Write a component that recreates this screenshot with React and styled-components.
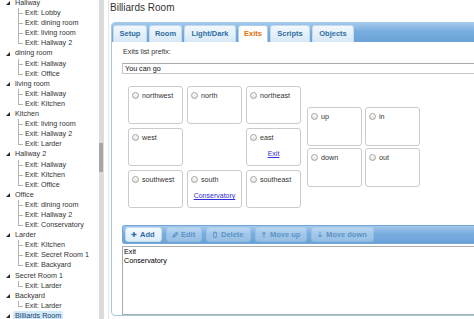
import React from 'react';
import styled, { createGlobalStyle } from 'styled-components';

const Global = createGlobalStyle`
  html, body { margin: 0; padding: 0; }
  body {
    width: 474px; height: 319px; overflow: hidden; background: #fff;
    font-family: "Liberation Sans", Arial, sans-serif; color: #333;
  }
`;

const Page = styled.div`
  display: flex;
  width: 474px;
  height: 319px;
  overflow: hidden;
`;

/* ---------- tree ---------- */
const TreePane = styled.div`
  flex: none;
  width: 99px;
  height: 100%;
  overflow: hidden;
  background: #fff;
`;

const TreeList = styled.div`
  margin-top: -2px;
  font-size: 7.2px;
  color: #333;
`;

const TopRow = styled.div`
  display: flex;
  align-items: center;
  height: 10.1px;
  line-height: 10.1px;
  padding-left: 6px;
  white-space: nowrap;
`;

const Expander = styled.svg`
  flex: none;
  width: 4px;
  height: 4px;
  margin-right: 5px;
`;

const NodeLabel = styled.span`
  padding: 0 ${p => (p.$selected ? '2px' : '0')};
  margin-left: ${p => (p.$selected ? '-2px' : '0')};
  background: ${p => (p.$selected ? '#d3eafb' : 'transparent')};
  color: ${p => (p.$selected ? '#1c3d6a' : 'inherit')};
  border-radius: 2px;
`;

const ChildRow = styled.div`
  position: relative;
  height: 10.1px;
  line-height: 10.1px;
  padding-left: 25px;
  white-space: nowrap;
  &::before {
    content: '';
    position: absolute;
    left: 18px;
    top: 0;
    height: ${p => (p.$last ? '50%' : '100%')};
    border-left: 1px solid #b4b4b4;
  }
  &::after {
    content: '';
    position: absolute;
    left: 18px;
    top: 50%;
    width: 5px;
    border-top: 1px solid #b4b4b4;
  }
`;

const ScrollTrack = styled.div`
  flex: none;
  width: 5px;
  height: 100%;
  background: #dcdcdc;
`;

const ScrollThumb = styled.div`
  margin-top: 143px;
  width: 4px;
  height: 29px;
  background: #a6a6a6;
`;

/* ---------- main ---------- */
const Main = styled.div`
  flex: none;
  width: 420px;
  margin-left: 4px;
  border-left: 1px solid #e0e7ee;
  padding-left: 1px;
  display: flex;
  flex-direction: column;
`;

const Title = styled.div`
  height: 20px;
  padding-top: 2px;
  line-height: 12px;
  font-size: 10px;
  color: #333;
  white-space: nowrap;
`;

const TabsWidget = styled.div`
  margin-left: 1px;
  border: 1px solid #a6c9e2;
  border-radius: 4px;
  background: #fff;
  display: flex;
  flex-direction: column;
`;

const TabNav = styled.div`
  display: flex;
  gap: 2px;
  height: 19px;
  padding: 2px 0 0 1px;
  box-sizing: border-box;
  background: linear-gradient(#a3c8ec 0%, #79addf 45%, #6aa2d7 100%);
  border-radius: 3px 3px 0 0;
`;

const Tab = styled.div`
  flex: none;
  width: ${p => p.$w}px;
  height: 17px;
  box-sizing: border-box;
  border: 1px solid ${p => (p.$active ? '#aed0ea' : '#c5dbec')};
  border-bottom: 0;
  border-radius: 3px 3px 0 0;
  background: ${p => (p.$active ? '#fff' : 'linear-gradient(#f2f8fd, #d7e8f8)')};
  color: ${p => (p.$active ? '#e17009' : '#2e6e9e')};
  font-weight: bold;
  font-size: 7.5px;
  line-height: 16px;
  text-align: center;
  white-space: nowrap;
`;

const TabBody = styled.div`
  padding: 5px 0 0 10px;
  display: flex;
  flex-direction: column;
`;

const FieldLabel = styled.div`
  height: 10px;
  line-height: 10px;
  padding-left: 1px;
  font-size: 7.2px;
  color: #333;
`;

const TextInput = styled.div`
  margin-top: 6px;
  height: 11px;
  box-sizing: border-box;
  border: 1px solid #c6c6c6;
  border-top-color: #a9a9a9;
  padding-left: 2px;
  font-size: 7.2px;
  line-height: 9px;
  color: #111;
  background: #fff;
`;

const ExitsArea = styled.div`
  margin: 12px 0 0 6px;
  display: flex;
  align-items: center;
  gap: 6px;
`;

const CompassGrid = styled.div`
  display: grid;
  grid-template-columns: repeat(${p => p.$cols}, 55px);
  grid-auto-rows: ${p => p.$rowH}px;
  column-gap: ${p => p.$colGap}px;
  row-gap: ${p => p.$rowGap}px;
`;

const Cell = styled.div`
  box-sizing: border-box;
  border: 1px solid #cbcbcb;
  border-radius: 3px;
  background: #fff;
  padding: 3px 3px;
  display: flex;
  flex-direction: column;
`;

const EmptyCell = styled.div``;

const RadioRow = styled.label`
  display: flex;
  align-items: center;
  gap: 3px;
  height: 10px;
  font-size: 7.2px;
  color: #333;
  white-space: nowrap;
`;

const Radio = styled.span`
  flex: none;
  width: 7px;
  height: 7px;
  box-sizing: border-box;
  border-radius: 50%;
  border: 1px solid #a3a3a3;
  background: linear-gradient(#fdfdfd, #e2e2e2);
`;

const ExitLink = styled.a`
  margin-top: 7px;
  align-self: center;
  font-size: 7px;
  line-height: 10px;
  color: #2f2fd8;
  text-decoration: underline;
  white-space: nowrap;
`;

const Toolbar = styled.div`
  margin-top: 17px;
  display: flex;
  gap: 4px;
  padding: 1px 2px;
  border: 1px solid #73a7d8;
  border-right: 0;
  border-radius: 3px 0 0 3px;
  background: linear-gradient(#a3c8ec 0%, #79addf 45%, #6aa2d7 100%);
`;

const ToolButton = styled.div`
  flex: none;
  width: ${p => p.$w}px;
  height: 15px;
  box-sizing: border-box;
  border: 1px solid #c5dbec;
  border-radius: 3px;
  background: linear-gradient(#f4f9fe, #dcecfa);
  color: #2e6e9e;
  opacity: ${p => (p.$disabled ? 0.38 : 1)};
  display: flex;
  align-items: center;
  padding-left: 5px;
  gap: 3px;
  font-weight: bold;
  font-size: 7.5px;
  white-space: nowrap;
`;

const ToolIcon = styled.svg`
  flex: none;
  width: 6px;
  height: 7px;
`;

const ListBox = styled.div`
  margin-top: 2px;
  height: 69px;
  box-sizing: border-box;
  border: 1px solid #ababab;
  border-right: 0;
  padding: 1px 1px;
  background: #fff;
  font-size: 7.2px;
  line-height: 8.5px;
  color: #000;
`;

/* ---------- data ---------- */
const tree = [
  ['Hallway', ['Lobby', 'dining room', 'living room', 'Hallway 2']],
  ['dining room', ['Hallway', 'Office']],
  ['living room', ['Hallway', 'Kitchen']],
  ['Kitchen', ['living room', 'Hallway 2', 'Larder']],
  ['Hallway 2', ['Hallway', 'Kitchen', 'Office']],
  ['Office', ['dining room', 'Hallway 2', 'Conservatory']],
  ['Larder', ['Kitchen', 'Secret Room 1', 'Backyard']],
  ['Secret Room 1', ['Larder']],
  ['Backyard', ['Larder']],
  ['Billiards Room', [], true],
];

const tabs = [
  ['Setup', 34], ['Room', 33], ['Light/Dark', 52], ['Exits', 30, true], ['Scripts', 40], ['Objects', 42],
];

const compass = [
  ['northwest'], ['north'], ['northeast'],
  ['west'], null, ['east', 'Exit'],
  ['southwest'], ['south', 'Conservatory'], ['southeast'],
];

const vertical = [['up'], ['in'], ['down'], ['out']];

const icons = {
  plus: <g stroke="currentColor" strokeWidth="1.4"><path d="M3 1v5M0.5 3.5h5" /></g>,
  pencil: <g stroke="currentColor" strokeWidth="1.1" fill="none"><path d="M1 6l0.3-1.5L4.5 1.2l1.2 1.2L2.5 5.7z" /></g>,
  trash: <g stroke="currentColor" strokeWidth="0.9" fill="none"><path d="M0.8 1.8h4.4M2.2 1.8V1h1.6v0.8M1.4 2.2l0.4 4.2h2.4l0.4-4.2" /></g>,
  up: <g stroke="currentColor" strokeWidth="1" fill="none"><path d="M3 6.5V1M1 3l2-2 2 2" /></g>,
  down: <g stroke="currentColor" strokeWidth="1" fill="none"><path d="M3 0.5V6M1 4l2 2 2-2" /></g>,
};

const buttons = [
  ['Add', 37, 'plus', false],
  ['Edit', 36, 'pencil', true],
  ['Delete', 45, 'trash', true],
  ['Move up', 52, 'up', true],
  ['Move down', 63, 'down', true],
];

function DirCell({ item }) {
  if (!item) return <EmptyCell />;
  const [name, link] = item;
  return (
    <Cell>
      <RadioRow><Radio />{name}</RadioRow>
      {link && <ExitLink>{link}</ExitLink>}
    </Cell>
  );
}

export default function App() {
  return (
    <>
      <Global />
      <Page>
        <TreePane>
          <TreeList>
            {tree.map(([name, kids, sel]) => (
              <React.Fragment key={name}>
                <TopRow>
                  <Expander viewBox="0 0 4 4"><polygon points="4,0 4,4 0,4" fill="#2a2a2a" /></Expander>
                  <NodeLabel $selected={sel}>{name}</NodeLabel>
                </TopRow>
                {kids.map((k, i) => (
                  <ChildRow key={k + i} $last={i === kids.length - 1}>Exit: {k}</ChildRow>
                ))}
              </React.Fragment>
            ))}
          </TreeList>
        </TreePane>
        <ScrollTrack><ScrollThumb /></ScrollTrack>
        <Main>
          <Title>Billiards Room</Title>
          <TabsWidget>
            <TabNav>
              {tabs.map(([t, w, a]) => (
                <Tab key={t} $w={w} $active={a}>{t}</Tab>
              ))}
            </TabNav>
            <TabBody>
              <FieldLabel>Exits list prefix:</FieldLabel>
              <TextInput>You can go</TextInput>
              <ExitsArea>
                <CompassGrid $cols={3} $rowH={38} $colGap={4} $rowGap={4}>
                  {compass.map((c, i) => <DirCell key={i} item={c} />)}
                </CompassGrid>
                <CompassGrid $cols={2} $rowH={39} $colGap={3} $rowGap={2}>
                  {vertical.map((c, i) => <DirCell key={i} item={c} />)}
                </CompassGrid>
              </ExitsArea>
              <Toolbar>
                {buttons.map(([label, w, ic, dis]) => (
                  <ToolButton key={label} $w={w} $disabled={dis}>
                    <ToolIcon viewBox="0 0 6 7">{icons[ic]}</ToolIcon>
                    {label}
                  </ToolButton>
                ))}
              </Toolbar>
              <ListBox>
                <div>Exit</div>
                <div>Conservatory</div>
              </ListBox>
            </TabBody>
          </TabsWidget>
        </Main>
      </Page>
    </>
  );
}
